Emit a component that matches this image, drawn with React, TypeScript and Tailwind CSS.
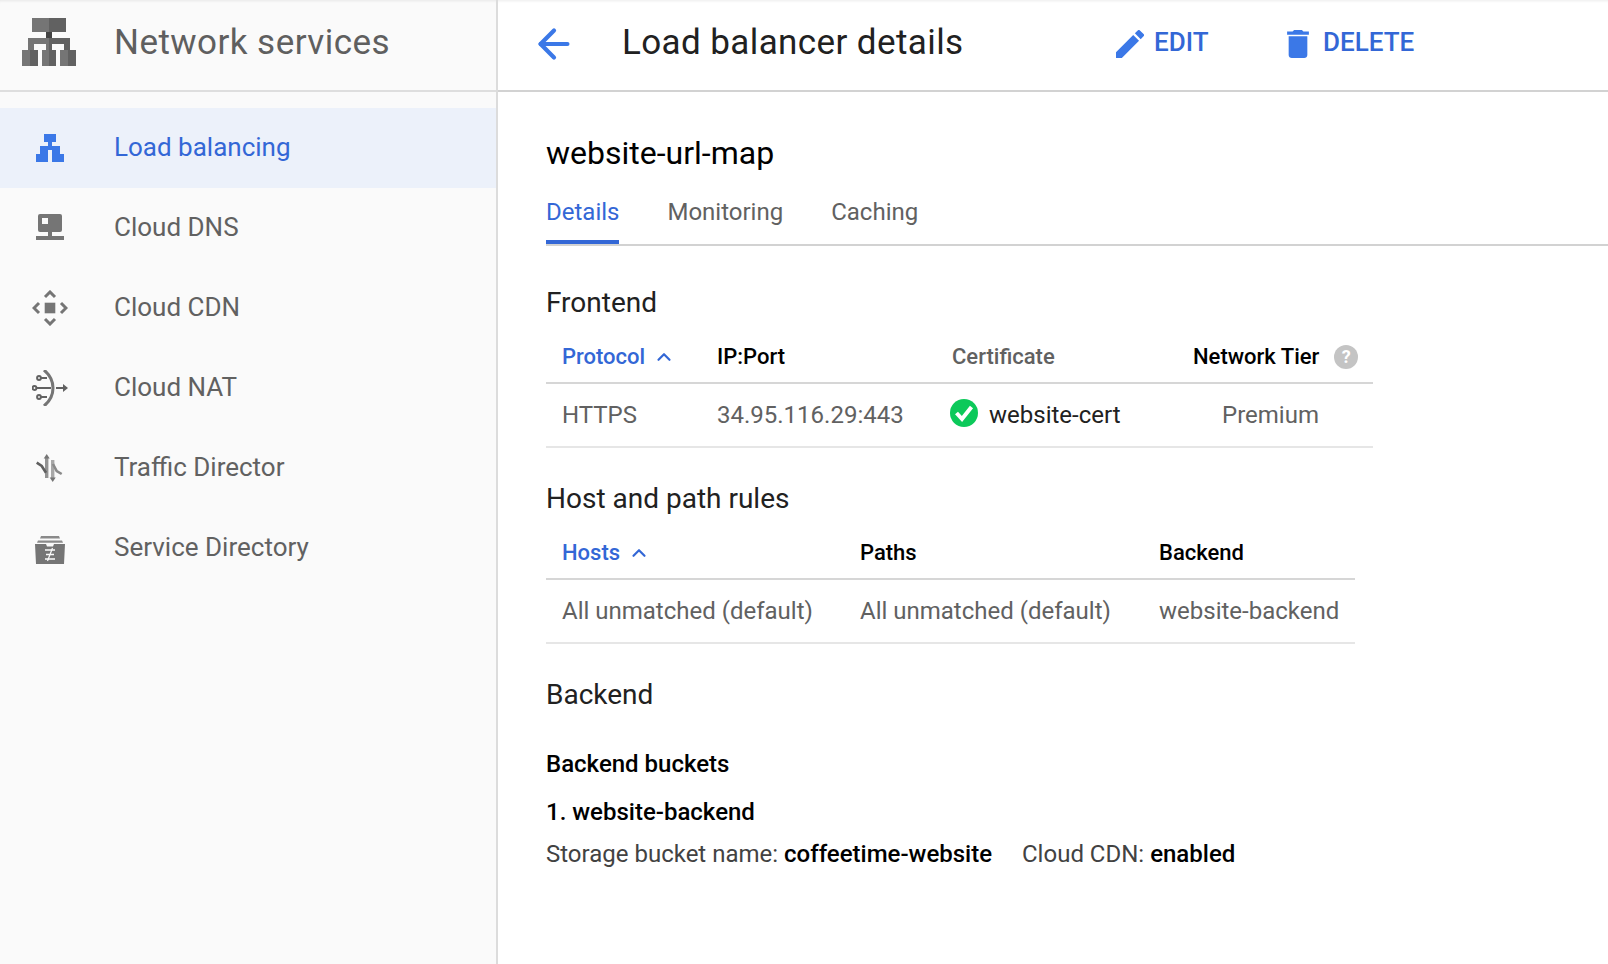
import React from "react";
import { ArrowLeft, ChevronUp } from "lucide-react";

const NetworkLogo = () => (
  <svg width="54" height="48" viewBox="0 0 54 48" className="shrink-0 -mt-[3px]">
    <rect x="10" y="0" width="17" height="14" fill="#757575" />
    <rect x="27" y="0" width="17" height="14" fill="#616161" />
    <rect x="24" y="14" width="6" height="6" fill="#424242" />
    <path d="M6 32V20h21v12h-3v-6H12v6z" fill="#757575" />
    <path d="M48 32V20H27v12h3v-6h12v6z" fill="#616161" />
    <rect x="0" y="32" width="8" height="16" fill="#757575" />
    <rect x="8" y="32" width="8" height="16" fill="#616161" />
    <rect x="20" y="32" width="7" height="16" fill="#757575" />
    <rect x="27" y="32" width="7" height="16" fill="#616161" />
    <rect x="38" y="32" width="8" height="16" fill="#757575" />
    <rect x="46" y="32" width="8" height="16" fill="#616161" />
  </svg>
);

const LoadBalancingIcon = () => (
  <svg width="28" height="28" viewBox="0 0 28 28" fill="#3b78e7">
    <rect x="8" y="0" width="12" height="8" />
    <rect x="12" y="8" width="4" height="4" />
    <rect x="4" y="12" width="20" height="8" />
    <rect x="0" y="20" width="12" height="8" />
    <rect x="16" y="20" width="12" height="8" />
    <rect x="12" y="16" width="4" height="12" fill="#ecf1fa" />
  </svg>
);

const DnsIcon = () => (
  <svg width="28" height="28" viewBox="0 0 28 28" fill="#757575">
    <path d="M4 0h20a2 2 0 0 1 2 2v14a2 2 0 0 1-2 2H4a2 2 0 0 1-2-2V2a2 2 0 0 1 2-2zm2 4v6h6V4z" fillRule="evenodd" />
    <rect x="12" y="18" width="4" height="4" />
    <rect x="0" y="22" width="28" height="4" />
  </svg>
);

const CdnIcon = () => (
  <svg width="36" height="36" viewBox="0 0 36 36" fill="none" stroke="#757575" strokeWidth="3">
    <rect x="12.7" y="12.7" width="10.6" height="10.6" fill="#757575" stroke="none" />
    <path d="M13 7l5-5 5 5M13 29l5 5 5-5M7 13l-5 5 5 5M29 13l5 5-5 5" />
  </svg>
);

const NatIcon = () => (
  <svg width="36" height="36" viewBox="0 0 36 36" fill="none" stroke="#616161" strokeWidth="2">
    <path d="M12 0c6 5 9 11 9 18s-3 13-9 18" strokeWidth="3" stroke="#757575" />
    <circle cx="7" cy="8" r="1.9" />
    <circle cx="2.5" cy="18" r="1.9" />
    <circle cx="7" cy="27" r="1.9" />
    <path d="M9 8h6M4.5 18h14.5M9 27h6M24 18h7" />
    <path d="M31 14l5 4-5 4z" fill="#616161" stroke="none" />
  </svg>
);

const TrafficIcon = () => (
  <svg width="28" height="28" viewBox="0 0 28 28" fill="none">
    <path d="M10.7 3v21" stroke="#929292" strokeWidth="3.4" />
    <path d="M16.7 6v19" stroke="#a8a8a8" strokeWidth="3.4" />
    <path d="M7.7 4.5l3-4.5 3 4.5z" fill="#757575" />
    <path d="M13.7 23.5l3 4.5 3-4.5z" fill="#757575" />
    <path d="M0.7 8.7l5 3.3 4.3 6.7" stroke="#5f5f5f" strokeWidth="2.6" />
    <path d="M25.7 20l-5-3-3.7-7" stroke="#8a8a8a" strokeWidth="2.6" />
  </svg>
);

const DirectoryIcon = () => (
  <svg width="30" height="28" viewBox="0 0 30 28" className="mt-[4px]">
    <path d="M6 0h18l1 2.4H5z" fill="#8a8a8a" />
    <path d="M3 4.4h24l1 2.4H2z" fill="#8a8a8a" />
    <path d="M0 8h11l1 2.4h6L19 8h11l-1 20H1z" fill="#757575" />
    <path d="M10 14h10M11 18.5h8M10 23h10" stroke="#fafafa" strokeWidth="1.4" />
    <path d="M17.5 12l-5 13" stroke="#fafafa" strokeWidth="1.2" />
  </svg>
);

const PencilIcon = () => (
  <svg width="28" height="28" viewBox="3 3 18 18" fill="#3b78e7">
    <path d="M3 17.25V21h3.75L17.81 9.94l-3.75-3.75L3 17.25zM20.71 7.04a1 1 0 0 0 0-1.41l-2.34-2.34a1 1 0 0 0-1.41 0l-1.83 1.83 3.75 3.75 1.83-1.83z" />
  </svg>
);

const TrashIcon = () => (
  <svg width="24" height="28" viewBox="5 3 14 18" fill="#3b78e7">
    <path d="M6 19c0 1.1.9 2 2 2h8c1.1 0 2-.9 2-2V7H6v12zM19 4h-3.5l-1-1h-5l-1 1H5v2h14V4z" />
  </svg>
);

const nav = [
  { label: "Load balancing", icon: <LoadBalancingIcon />, active: true },
  { label: "Cloud DNS", icon: <DnsIcon /> },
  { label: "Cloud CDN", icon: <CdnIcon /> },
  { label: "Cloud NAT", icon: <NatIcon /> },
  { label: "Traffic Director", icon: <TrafficIcon /> },
  { label: "Service Directory", icon: <DirectoryIcon /> },
];

const Sidebar = () => (
  <aside className="w-[498px] shrink-0 bg-[#fafafa] border-r-2 border-[#dcdcdc] flex flex-col shadow-[inset_0_3px_3px_-2px_rgba(0,0,0,0.08)]">
    <div className="h-[92px] shrink-0 flex items-center pb-[3px] border-b-2 border-[#dedede]">
      <div className="w-[114px] pl-[22px] shrink-0">
        <NetworkLogo />
      </div>
      <span className="text-[35px] tracking-[0.45px] text-[#5f5f5f]">Network services</span>
    </div>
    <nav className="pt-4 flex flex-col">
      {nav.map((item) => (
        <div
          key={item.label}
          className={`h-[80px] flex items-center ${item.active ? "bg-[#ecf1fa] text-[#3367d6]" : "text-[#616161]"}`}
        >
          <div className="w-[114px] pr-[15px] shrink-0 flex justify-center">{item.icon}</div>
          <span className="text-[26px] pb-[2px]">{item.label}</span>
        </div>
      ))}
    </nav>
  </aside>
);

const Header = () => (
  <div className="h-[92px] shrink-0 flex items-center pb-[3px] border-b-2 border-[#d2d2d2] shadow-[inset_0_3px_3px_-2px_rgba(0,0,0,0.08)]">
    <div className="w-[124px] pl-[33px] shrink-0">
      <ArrowLeft size={46} strokeWidth={2.2} color="#3b78e7" />
    </div>
    <h1 className="w-[494px] shrink-0 text-[35px] tracking-[0.4px] text-[#212121]">Load balancer details</h1>
    <div className="w-[170px] shrink-0 flex items-center gap-[10px] text-[#3367d6] text-[26px] font-medium">
      <PencilIcon />
      <span className="-mt-[2px]">EDIT</span>
    </div>
    <div className="flex items-center gap-[13px] text-[#3367d6] text-[26px] font-medium">
      <TrashIcon />
      <span className="-mt-[2px]">DELETE</span>
    </div>
  </div>
);

const Tabs = () => (
  <div className="flex gap-12 border-b-2 border-[#d2d2d2] h-[56px] mt-[15px]">
    <div className="h-[54px] pt-[4px] border-b-4 border-[#3367d6] text-[#3367d6] text-[24px]">Details</div>
    <div className="h-[54px] pt-[4px] text-[#616161] text-[24px]">Monitoring</div>
    <div className="h-[54px] pt-[4px] text-[#616161] text-[24px]">Caching</div>
  </div>
);

const Sort = ({ label }: { label: string }) => (
  <span className="flex items-center gap-2 text-[#3367d6] font-medium">
    {label}
    <ChevronUp size={22} strokeWidth={2.4} />
  </span>
);

const Frontend = () => (
  <div className="w-[827px] mt-[8px]">
    <div className="grid grid-cols-[155px_235px_241px_1fr] pl-4 pt-[2px] h-[55px] items-center border-b-2 border-[#d6d6d6] text-[22px] font-medium text-black">
      <Sort label="Protocol" />
      <span>IP:Port</span>
      <span className="text-[#616161]">Certificate</span>
      <span className="flex items-center gap-[15px]">
        Network Tier
        <span className="w-6 h-6 rounded-full bg-[#c4c4c4] text-white text-[18px] font-bold flex items-center justify-center">?</span>
      </span>
    </div>
    <div className="grid grid-cols-[155px_235px_241px_1fr] pl-4 pb-[1px] h-[64px] items-center border-b-2 border-[#e6e6e6] text-[24px] text-[#616161]">
      <span>HTTPS</span>
      <span>34.95.116.29:443</span>
      <span className="flex items-center gap-[11px] text-[#212121] -ml-[2px]">
        <svg width="28" height="28" viewBox="0 0 28 28" className="shrink-0 -mt-[3px]">
          <circle cx="14" cy="14" r="14" fill="#0cc95a" />
          <path d="M6.5 14l5.5 6 9.5-12" fill="none" stroke="#fff" strokeWidth="4" />
        </svg>
        website-cert
      </span>
      <span className="pl-[29px]">Premium</span>
    </div>
  </div>
);

const HostRules = () => (
  <div className="w-[809px] mt-[8px]">
    <div className="grid grid-cols-[298px_299px_1fr] pl-4 pt-[2px] h-[55px] items-center border-b-2 border-[#d6d6d6] text-[22px] font-medium text-black">
      <Sort label="Hosts" />
      <span>Paths</span>
      <span>Backend</span>
    </div>
    <div className="grid grid-cols-[298px_299px_1fr] pl-4 pb-[1px] h-[64px] items-center border-b-2 border-[#e6e6e6] text-[24px] text-[#616161]">
      <span>All unmatched (default)</span>
      <span>All unmatched (default)</span>
      <span>website-backend</span>
    </div>
  </div>
);

export default function App() {
  return (
    <div className="w-[1608px] h-[964px] flex overflow-hidden bg-white font-['Roboto',sans-serif]">
      <Sidebar />
      <main className="flex-1 flex flex-col">
        <Header />
        <div className="pl-[48px] flex flex-col">
          <h2 className="mt-[39px] h-[44px] flex items-center text-[32px] text-black">website-url-map</h2>
          <Tabs />
          <h3 className="mt-[39px] h-[36px] flex items-center text-[28px] text-[#212121]">Frontend</h3>
          <Frontend />
          <h3 className="mt-[33px] h-[36px] flex items-center text-[28px] text-[#212121]">Host and path rules</h3>
          <HostRules />
          <h3 className="mt-[33px] h-[36px] flex items-center text-[28px] text-[#212121]">Backend</h3>
          <div className="mt-[33px] text-[24px] font-medium text-black">Backend buckets</div>
          <div className="mt-[12px] text-[24px] font-medium text-black">1. website-backend</div>
          <div className="mt-[6px] flex text-[24px] text-[#424242]">
            <span className="w-[476px]">
              Storage bucket name: <span className="font-medium text-black">coffeetime-website</span>
            </span>
            <span>
              Cloud CDN: <span className="font-medium text-black">enabled</span>
            </span>
          </div>
        </div>
      </main>
    </div>
  );
}
